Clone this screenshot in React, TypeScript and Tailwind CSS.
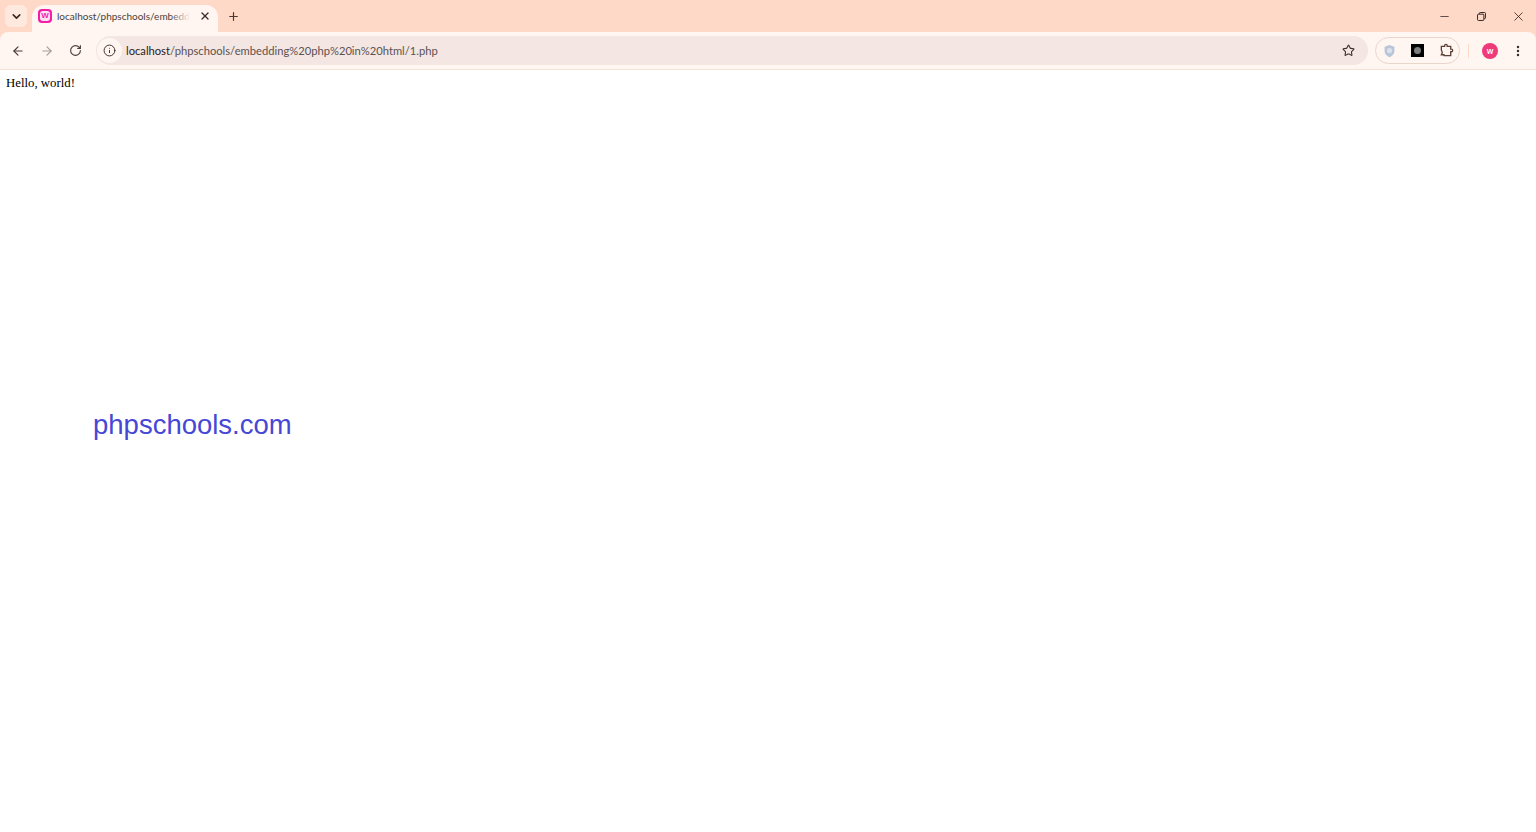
import { ArrowLeft, ArrowRight, ChevronDown, EllipsisVertical, Info, Minus, Plus, RotateCw, Star, X } from "lucide-react";

// ── Tab favicon ───────────────────────────────────────────────────────────────
function Favicon() {
  return (
    <span className="flex h-[14px] w-[14px] shrink-0 items-center justify-center rounded-[4px] bg-[#f21ea6]">
      <span className="flex h-[10px] w-[10px] items-center justify-center rounded-[3px] bg-[#ffe4f4] font-['Liberation_Sans',sans-serif] text-[8px] leading-none font-bold text-[#f21ea6]">
        W
      </span>
    </span>
  );
}

// ── Tab strip ─────────────────────────────────────────────────────────────────
function TabStrip() {
  return (
    <div className="flex h-8 items-start bg-[#ffd9c7]">
      <button className="mt-[5px] ml-[5px] flex h-[22px] w-[22px] items-center justify-center rounded-md bg-[#ffe9df] text-[#3b2a24]">
        <ChevronDown size={13} strokeWidth={3} />
      </button>

      <div className="mt-[5px] ml-[5px] flex h-[27px] w-[186px] items-center rounded-t-xl bg-[#fff5f1] pr-[7px] pb-[5px] pl-[6px]">
        <Favicon />
        <span className="relative ml-[5px] w-[133px] overflow-hidden font-['Lato',sans-serif] text-[10px] leading-[14px] whitespace-nowrap text-[#4a3f3a]">
          localhost/phpschools/embedding
          <span className="absolute inset-y-0 right-0 w-5 bg-gradient-to-r from-transparent to-[#fff5f1]" />
        </span>
        <X size={12} strokeWidth={2.6} className="ml-[9px] shrink-0 text-[#3b2a24]" />
      </div>

      <Plus size={13} strokeWidth={2.2} className="mt-[9.500px] ml-[9px] text-[#4a3a33]" />

      <div className="ml-auto flex h-8 items-center text-[#2f2522]">
        <Minus size={13} strokeWidth={1.4} className="mr-[24px]" />
        <span className="mr-[23px] h-[13px] w-[13px] p-[2px]">
          <svg viewBox="0 0 10 10" className="h-[9px] w-[9px]" fill="none" stroke="currentColor" strokeWidth="1.1">
            <rect x="0.6" y="2.4" width="7" height="7" rx="1" />
            <path d="M2.6 2.2V1.6a1 1 0 0 1 1-1h4.8a1 1 0 0 1 1 1v4.8a1 1 0 0 1-1 1h-.6" />
          </svg>
        </span>
        <X size={15} strokeWidth={1.3} className="mr-[10px]" />
      </div>
    </div>
  );
}

// ── Extension pill ────────────────────────────────────────────────────────────
function ExtensionPill() {
  return (
    <div className="ml-[7px] flex h-[27px] w-[85px] items-center rounded-full border border-[#e9d5cb] pl-[7px]">
      <svg viewBox="0 0 14 16" className="h-[14px] w-[13px] shrink-0">
        <path d="M7 1l5.600 2v5.200c0 3.200-2.400 5.400-5.600 6.800C3.800 13.600 1.400 11.400 1.400 8.200V3z" fill="#b9c6da" />
        <circle cx="7" cy="7.500" r="3" fill="#dbe2ec" />
      </svg>
      <span className="ml-[15px] flex h-[13px] w-[13px] shrink-0 items-center justify-center bg-black">
        <span className="h-[7px] w-[7px] rounded-full bg-[#7d7d7d]" />
      </span>
      <svg viewBox="0 0 16 16" className="ml-[15px] h-[15px] w-[15px] shrink-0" fill="none" stroke="#5a4037" strokeWidth="1.4">
        <path d="M2.500 3.500H6V2.800a1.400 1.400 0 0 1 2.800 0v.7h3.700v3h.7a1.400 1.400 0 0 1 0 2.800h-.7v4.200H5.500v-.8a1.400 1.400 0 0 0-.1-.2H2.500l1-2.500-1-2.500z" />
      </svg>
    </div>
  );
}

// ── Toolbar ───────────────────────────────────────────────────────────────────
function Toolbar() {
  return (
    <div className="flex h-[38px] items-center rounded-t-lg border-b border-[#f5e3da] bg-[#fff5f1]">
      <ArrowLeft size={14} strokeWidth={2} className="ml-[11px] text-[#4a3a33]" />
      <ArrowRight size={14} strokeWidth={2} className="ml-[15px] text-[#a99c96]" />
      <RotateCw size={13} strokeWidth={2} className="ml-[15px] text-[#4a3a33]" />

      <div className="ml-[14px] flex h-[29px] w-[1272px] items-center rounded-full bg-[#f3e6e3] pr-[13px] pl-[1px]">
        <span className="flex h-[25px] w-[25px] items-center justify-center rounded-full bg-[#fff5f1]">
          <Info size={13} strokeWidth={1.8} className="text-[#3b2f2b]" />
        </span>
        <span className="ml-[4px] font-['Lato',sans-serif] text-[11.200px] leading-none text-[#5c5250]">
          <span className="text-[#2b211e]">localhost</span>/phpschools/embedding%20php%20in%20html/1.php
        </span>
        <Star size={13} strokeWidth={2} className="ml-auto text-[#3b2f2b]" />
      </div>

      <ExtensionPill />

      <span className="ml-[8px] h-[14px] w-px bg-[#ffd9c7]" />

      <span className="ml-[13px] flex h-4 w-4 items-center justify-center rounded-full bg-[#ee3a78] font-['Noto_Sans',sans-serif] text-[8px] leading-none font-semibold text-white">
        w
      </span>

      <EllipsisVertical size={14} strokeWidth={2.2} className="ml-[13px] text-[#3b2f2b]" />
    </div>
  );
}

// ── App ───────────────────────────────────────────────────────────────────────
export default function App() {
  return (
    <div className="flex h-[832px] w-[1536px] flex-col overflow-hidden bg-[#ffd9c7]">
      <TabStrip />
      <Toolbar />
      <main className="flex-1 bg-white px-[6px] pt-[6px]">
        <p className="font-['Liberation_Serif',serif] text-[12.800px] leading-[15px] text-black">Hello, world!</p>
        <p className="mt-[318px] ml-[87px] font-['Liberation_Sans',sans-serif] text-[27.500px] leading-[32px] text-[#4747d6]">
          phpschools.com
        </p>
      </main>
    </div>
  );
}
